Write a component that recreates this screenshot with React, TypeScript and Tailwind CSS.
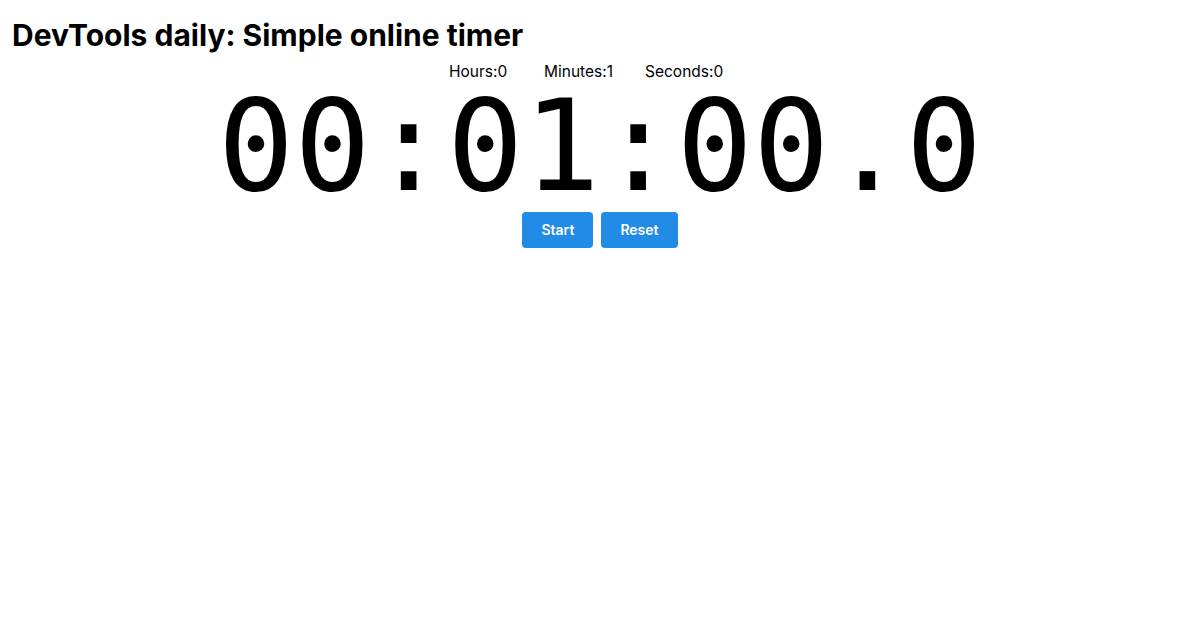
import React from 'react';

const App: React.FC = () => {
  return (
    <div className="min-h-screen bg-white px-3 pt-[17px] text-black" style={{ fontFamily: 'Inter, "Noto Sans", sans-serif' }}>
      <h1 className="text-[30px] font-bold leading-[36px]">DevTools daily: Simple online timer</h1>
      <div className="flex flex-col items-center">
        <div className="mt-[7px] flex text-[15.5px] leading-6">
          <span className="w-[95px]">Hours:0</span>
          <span className="w-[101px]">Minutes:1</span>
          <span className="w-[106px]">Seconds:0</span>
        </div>
        <div className="text-[127px] leading-[124px] font-['DejaVu_Sans_Mono',monospace]">00:01:00.0</div>
        <div className="mt-1 flex gap-2">
          <button className="h-9 rounded px-[19px] bg-[#228be6] text-sm font-semibold text-white">Start</button>
          <button className="h-9 rounded px-[19px] bg-[#228be6] text-sm font-semibold text-white">Reset</button>
        </div>
      </div>
    </div>
  );
};

export default App;
